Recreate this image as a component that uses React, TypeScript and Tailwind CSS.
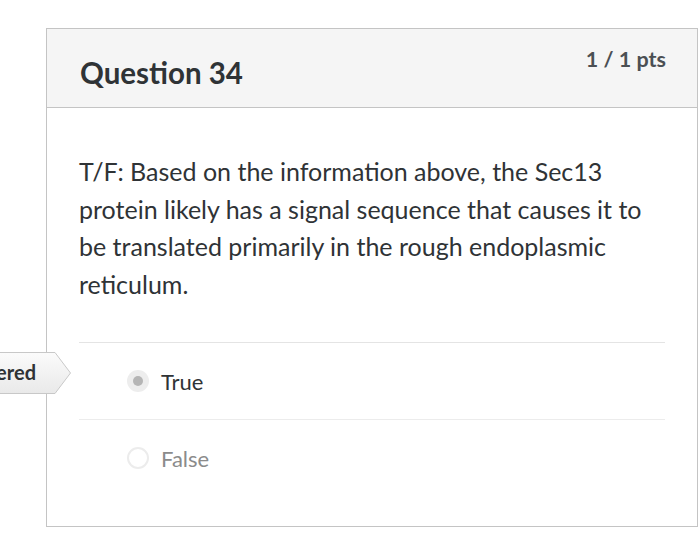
import React from "react";

const font = { fontFamily: "Lato, 'Noto Sans', sans-serif" };

function AnsweredTag() {
  return (
    <div className="absolute left-0 top-[352px] h-[42px] w-[72px]">
      <svg className="absolute inset-0" width="72" height="42" viewBox="0 0 72 42">
        <defs>
          <linearGradient id="tagGrad" x1="0" y1="0" x2="0" y2="1">
            <stop offset="0" stopColor="#fbfbfb" />
            <stop offset="1" stopColor="#e9e9e9" />
          </linearGradient>
        </defs>
        <path d="M-2 0.5 H55 L70.5 21 L55 41.5 H-2 Z" fill="url(#tagGrad)" stroke="#c8c8c8" strokeWidth="1" />
      </svg>
      <div className="absolute right-[36px] top-[7px] whitespace-nowrap text-[20px] font-bold leading-[26px] text-[#2f3336]">
        Answered
      </div>
    </div>
  );
}

function Option({ label, selected }: { label: string; selected?: boolean }) {
  return (
    <div className="flex h-[76px] items-center pl-[48px]">
      {selected ? (
        <span className="flex h-[22px] w-[22px] items-center justify-center rounded-full bg-[#ededed]">
          <span className="h-[10px] w-[10px] rounded-full bg-[#b5b5b5]" />
        </span>
      ) : (
        <span className="h-[22px] w-[22px] rounded-full border-2 border-[#ececec] bg-white" />
      )}
      <span className={"ml-[12px] text-[22px] " + (selected ? "text-[#2f3336]" : "text-[#8b8b8b]")}>{label}</span>
    </div>
  );
}

export default function App() {
  return (
    <div className="relative h-[551px] w-[700px] overflow-hidden bg-white" style={font}>
      <div className="ml-[46px] mt-[28px] w-[652px] border border-[#c4c4c4] bg-white">
        <div className="flex h-[79px] items-start justify-between border-b border-[#c4c4c4] bg-[#f5f5f5] pl-[33px] pr-[31px]">
          <h2 className="mt-[26px] text-[29.5px] font-bold leading-[36px] text-[#2f3336]">Question 34</h2>
          <div className="mt-[17px] text-[21.5px] font-bold leading-[26px] text-[#4b4f53]">1 / 1 pts</div>
        </div>
        <div className="px-[32px] pb-[30px] pt-[45px]">
          <p className="w-[586px] text-[25px] leading-[37.5px] text-[#2f3336]">
            T/F: Based on the information above, the Sec13 protein likely has a signal sequence that causes it to be
            translated primarily in the rough endoplasmic reticulum.
          </p>
          <div className="mt-[39px] border-t border-[#e4e4e4]">
            <Option label="True" selected />
            <div className="border-t border-[#ececec]" />
            <Option label="False" />
          </div>
        </div>
      </div>
      <AnsweredTag />
    </div>
  );
}
